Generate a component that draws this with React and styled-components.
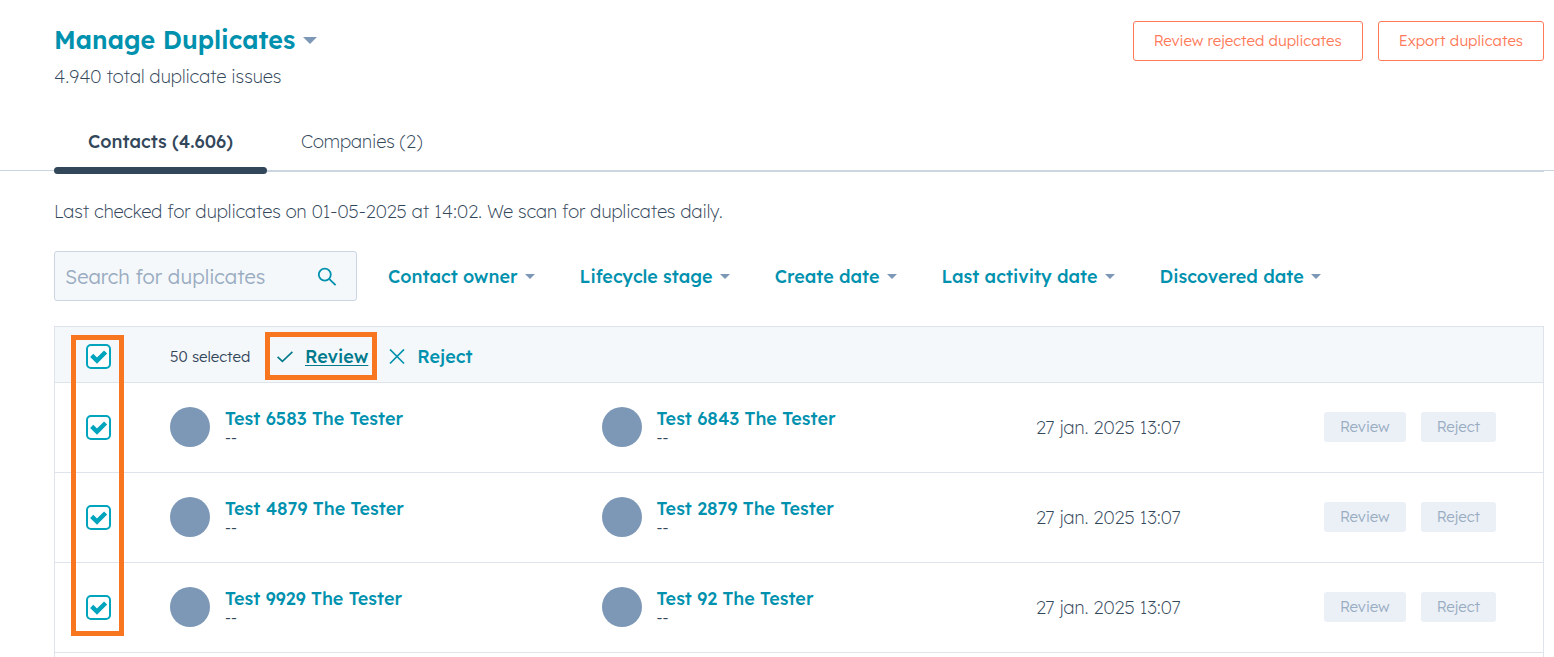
import React, { useState } from "react";
import styled, { createGlobalStyle } from "styled-components";

const GlobalStyle = createGlobalStyle`
  * {
    box-sizing: border-box;
  }

  body {
    margin: 0;
    background: #fff;
    color: #33475b;
    font-family: "Lexend Deca", Inter, "Liberation Sans", sans-serif;
    font-size: 18px;
    font-weight: 220;
    line-height: 24px;
  }

  button, input {
    font: inherit;
  }
`;

const Page = styled.div`
  display: flex;
  flex-direction: column;
  min-height: 100vh;
`;

const Header = styled.header`
  display: flex;
  justify-content: space-between;
  align-items: flex-start;
  padding: 21px 10px 0 54px;
`;

const TitleButton = styled.button`
  display: flex;
  align-items: center;
  gap: 8px;
  padding: 0;
  border: 0;
  background: none;
  color: #0091ae;
  font-size: 25px;
  font-weight: 600;
  line-height: 38px;
  cursor: pointer;
`;

const Title = styled.h1`
  margin: 0;
  font: inherit;
`;

const Subtitle = styled.p`
  margin: 6px 0 0;
`;

const HeaderActions = styled.div`
  display: flex;
  gap: 15px;
`;

const OutlineButton = styled.button`
  height: 40px;
  padding: 0 20px;
  border: 1px solid #ff7a59;
  border-radius: 3px;
  background: #fff;
  color: #ff7a59;
  font-size: 15px;
  font-weight: 300;
  cursor: pointer;
`;

const Caret = styled.span`
  border: ${(props) => props.$size}px solid transparent;
  border-top-color: #7c98b6;
  border-bottom: 0;
`;

const TabBar = styled.div`
  margin-top: 24px;
  padding: 0 10px 0 54px;
  border-bottom: 1px solid #cbd6e2;
`;

const Tabs = styled.div`
  display: flex;
  margin-bottom: -2px;
  border-bottom: 2px solid #cbd6e2;
`;

const Tab = styled.button`
  position: relative;
  height: 57px;
  padding: 0 34px;
  border: 0;
  background: none;
  color: #33475b;
  font-weight: ${(props) => (props.$active ? 500 : 220)};
  cursor: pointer;

  &::after {
    content: "";
    display: ${(props) => (props.$active ? "block" : "none")};
    position: absolute;
    left: 0;
    right: 0;
    bottom: -4px;
    height: 7px;
    border-radius: 4px;
    background: #33475b;
  }
`;

const Content = styled.main`
  display: flex;
  flex: 1;
  flex-direction: column;
  padding: 29px 10px 0 54px;
`;

const LastChecked = styled.p`
  margin: 0 0 27px;
`;

const Toolbar = styled.div`
  display: flex;
  align-items: center;
  margin-bottom: 25px;
`;

const SearchBox = styled.label`
  display: flex;
  align-items: center;
  width: 303px;
  height: 50px;
  margin-right: 31px;
  padding: 1px 19px 0 10px;
  border: 1px solid #cbd6e2;
  border-radius: 3px;
  background: #f5f8fa;
`;

const SearchInput = styled.input`
  flex: 1;
  min-width: 0;
  padding: 0;
  border: 0;
  outline: 0;
  background: none;
  color: #33475b;
  font-size: 20px;
  font-weight: 300;

  &::placeholder {
    color: #99acc2;
    opacity: 1;
  }
`;

const Filters = styled.div`
  display: flex;
  gap: 45px;
`;

const FilterButton = styled.button`
  display: flex;
  align-items: center;
  gap: 7px;
  padding: 1px 0 0;
  border: 0;
  background: none;
  color: #0091ae;
  font-weight: 500;
  white-space: nowrap;
  cursor: pointer;
`;

const TablePanel = styled.div`
  position: relative;
  flex: 1;
  border: 1px solid #dfe3eb;
  border-bottom: 0;
`;

const Table = styled.table`
  width: 100%;
  border-collapse: separate;
  border-spacing: 0;
  table-layout: fixed;
`;

const Col = styled.col`
  width: ${(props) => props.$width};
`;

const SelectionCell = styled.td`
  height: 56px;
  padding: ${(props) => (props.$check ? "4px 0 0 31px" : "4px 0 0")};
  border-bottom: 1px solid #dfe3eb;
  background: #f5f8fa;
`;

const Cell = styled.td`
  height: 90px;
  padding: ${(props) => (props.$check ? "0 0 0 31px" : "0")};
  border-bottom: 1px solid #dfe3eb;
`;

const SelectionBar = styled.div`
  display: flex;
  align-items: center;
`;

const SelectedCount = styled.span`
  width: 107px;
  font-size: 15px;
  font-weight: 300;
`;

const BulkButton = styled.button`
  display: flex;
  align-items: center;
  gap: 12px;
  margin-right: 21px;
  padding: 0;
  border: 0;
  background: none;
  color: ${(props) => (props.$hovered ? "#007a8c" : "#0091ae")};
  font-weight: 500;
  text-decoration: ${(props) => (props.$hovered ? "underline" : "none")};
  text-decoration-thickness: 1px;
  text-underline-offset: 2px;
  cursor: pointer;
`;

const CheckLabel = styled.label`
  display: block;
  position: relative;
  width: 25px;
  height: 25px;

  svg {
    position: absolute;
    inset: 0;
    pointer-events: none;
  }
`;

const CheckInput = styled.input`
  display: block;
  appearance: none;
  width: 25px;
  height: 25px;
  margin: 0;
  border: 2px solid #00a4bd;
  border-radius: 5px;
  background: #fff;
  cursor: pointer;
`;

const Contact = styled.div`
  display: flex;
  align-items: center;
  gap: 15px;
  padding-bottom: 2px;
`;

const Avatar = styled.span`
  width: 40px;
  height: 40px;
  border-radius: 50%;
  background: #7c98b6;
`;

const ContactLink = styled.a`
  display: block;
  color: #0091ae;
  font-weight: 500;
  line-height: 22px;
  text-decoration: none;
`;

const ContactDetail = styled.div`
  font-size: 15px;
  font-weight: 300;
  line-height: 16px;
`;

const RowActions = styled.div`
  display: flex;
  gap: 15px;
  padding-bottom: 2px;
`;

const SmallButton = styled.button`
  height: 30px;
  padding: 0 16px;
  border: 0;
  border-radius: 3px;
  background: #eaf0f6;
  color: #99acc2;
  font-size: 15px;
  font-weight: 300;
`;

const Highlight = styled.div`
  position: absolute;
  top: ${(props) => props.$top}px;
  left: ${(props) => props.$left}px;
  width: ${(props) => props.$width}px;
  height: ${(props) => props.$height}px;
  border: 5px solid #f8761f;
  pointer-events: none;
`;

const filters = [
  "Contact owner",
  "Lifecycle stage",
  "Create date",
  "Last activity date",
  "Discovered date",
];

const duplicates = [
  { first: "Test 6583 The Tester", second: "Test 6843 The Tester", date: "27 jan. 2025 13:07" },
  { first: "Test 4879 The Tester", second: "Test 2879 The Tester", date: "27 jan. 2025 13:07" },
  { first: "Test 9929 The Tester", second: "Test 92 The Tester", date: "27 jan. 2025 13:07" },
];

function SearchIcon() {
  return (
    <svg width="20" height="20" viewBox="0 0 20 20" fill="none" stroke="#0091ae" strokeWidth="1.8">
      <circle cx="7.8" cy="7.6" r="6" />
      <path d="M12.1 11.9L18.6 18.2" />
    </svg>
  );
}

function CheckIcon() {
  return (
    <svg width="16" height="16" viewBox="0 0 16 16" fill="none" stroke="currentColor" strokeWidth="1.6">
      <path d="M0.6 7.8L5.4 12.4L15.4 2.8" />
    </svg>
  );
}

function CloseIcon() {
  return (
    <svg width="16" height="16" viewBox="0 0 16 16" fill="none" stroke="currentColor" strokeWidth="1.7">
      <path d="M1 0.5L15 14.5M15 0.5L1 14.5" />
    </svg>
  );
}

function Checkbox({ label, checked, onChange }) {
  return (
    <CheckLabel>
      <CheckInput type="checkbox" aria-label={label} checked={checked} onChange={onChange} />
      {checked && (
        <svg width="25" height="25" viewBox="0 0 25 25" fill="none" stroke="#00a4bd" strokeWidth="4.4">
          <path d="M5.7 11.4L11 16.6L19.6 8" />
        </svg>
      )}
    </CheckLabel>
  );
}

function ContactCell({ name }) {
  return (
    <Cell>
      <Contact>
        <Avatar />
        <div>
          <ContactLink href="#">{name}</ContactLink>
          <ContactDetail>--</ContactDetail>
        </div>
      </Contact>
    </Cell>
  );
}

function App() {
  const [tab, setTab] = useState("contacts");
  const [selected, setSelected] = useState(duplicates.map(() => true));
  const allSelected = selected.every(Boolean);

  const toggleAll = () => setSelected(selected.map(() => !allSelected));
  const toggle = (index) =>
    setSelected(selected.map((value, i) => (i === index ? !value : value)));

  return (
    <Page>
      <GlobalStyle />
      <Header>
        <div>
          <TitleButton>
            <Title>Manage Duplicates</Title>
            <Caret $size={7} />
          </TitleButton>
          <Subtitle>4.940 total duplicate issues</Subtitle>
        </div>
        <HeaderActions>
          <OutlineButton>Review rejected duplicates</OutlineButton>
          <OutlineButton>Export duplicates</OutlineButton>
        </HeaderActions>
      </Header>
      <TabBar>
        <Tabs>
          <Tab $active={tab === "contacts"} onClick={() => setTab("contacts")}>
            Contacts (4.606)
          </Tab>
          <Tab $active={tab === "companies"} onClick={() => setTab("companies")}>
            Companies (2)
          </Tab>
        </Tabs>
      </TabBar>
      <Content>
        <LastChecked>
          Last checked for duplicates on 01-05-2025 at 14:02. We scan for duplicates daily.
        </LastChecked>
        <Toolbar>
          <SearchBox>
            <SearchInput
              type="text"
              aria-label="Search for duplicates"
              placeholder="Search for duplicates"
            />
            <SearchIcon />
          </SearchBox>
          <Filters>
            {filters.map((filter) => (
              <FilterButton key={filter}>
                {filter}
                <Caret $size={5} />
              </FilterButton>
            ))}
          </Filters>
        </Toolbar>
        <TablePanel>
          <Table>
            <colgroup>
              <Col $width="115px" />
              <Col $width="29%" />
              <Col $width="auto" />
              <Col $width="288px" />
              <Col $width="219px" />
            </colgroup>
            <thead>
              <tr>
                <SelectionCell $check>
                  <Checkbox label="Select all" checked={allSelected} onChange={toggleAll} />
                </SelectionCell>
                <SelectionCell colSpan={4}>
                  <SelectionBar>
                    <SelectedCount>50 selected</SelectedCount>
                    <BulkButton $hovered>
                      <CheckIcon />
                      Review
                    </BulkButton>
                    <BulkButton>
                      <CloseIcon />
                      Reject
                    </BulkButton>
                  </SelectionBar>
                </SelectionCell>
              </tr>
            </thead>
            <tbody>
              {duplicates.map((row, index) => (
                <tr key={row.first}>
                  <Cell $check>
                    <Checkbox
                      label={`Select ${row.first}`}
                      checked={selected[index]}
                      onChange={() => toggle(index)}
                    />
                  </Cell>
                  <ContactCell name={row.first} />
                  <ContactCell name={row.second} />
                  <Cell>{row.date}</Cell>
                  <Cell>
                    <RowActions>
                      <SmallButton disabled>Review</SmallButton>
                      <SmallButton disabled>Reject</SmallButton>
                    </RowActions>
                  </Cell>
                </tr>
              ))}
            </tbody>
          </Table>
          <Highlight $top={8} $left={16} $width={53} $height={301} />
          <Highlight $top={5} $left={210} $width={112} $height={48} />
        </TablePanel>
      </Content>
    </Page>
  );
}

export default App;
